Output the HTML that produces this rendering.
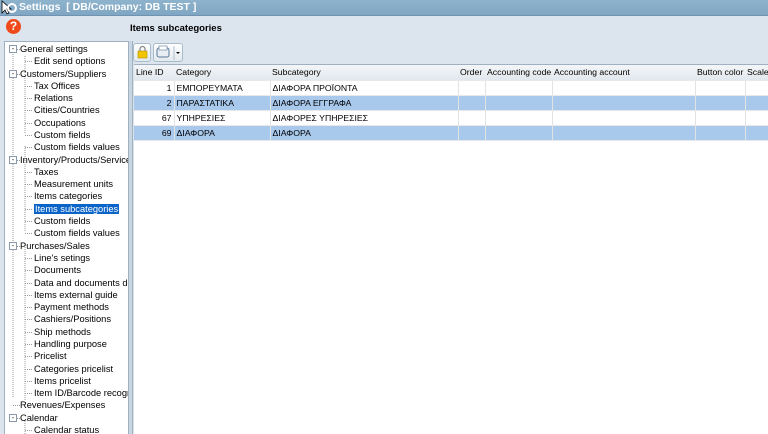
<!DOCTYPE html>
<html><head><meta charset="utf-8"><style>
*{margin:0;padding:0;box-sizing:border-box}
body{width:768px;height:434px;overflow:hidden;background:#dce5ee;font-family:"Liberation Sans","DejaVu Sans",sans-serif;font-size:9.3px;color:#000;position:relative}
.title{position:absolute;left:0;top:0;width:768px;height:16px;background:linear-gradient(#8fb3cd,#7fa6c3);border-bottom:1px solid #6f93b0;color:#fff;font-weight:bold;font-size:10.5px;line-height:15px;padding-left:19px}
.help{position:absolute;left:6px;top:19px;width:15px;height:15px;border-radius:50%;background:#f04a1a;color:#fff;font-weight:bold;font-size:12px;text-align:center;line-height:15px}
.hdr{position:absolute;left:130px;top:23px;font-weight:bold;font-size:9.5px}
.tree{position:absolute;left:4px;top:41px;width:125px;height:393px;background:#fff;border:1px solid #9fb0c0;border-bottom:none;overflow:hidden}
.strip{position:absolute;left:129px;top:41px;width:4px;height:393px;background:#c9d7e3;border-right:1px solid #9fb0c0}
.it{position:absolute;white-space:nowrap;line-height:12px}
.sel{background:#0a64c8;color:#fff;padding:0 1px}
.tb{position:absolute;top:43px;height:19px;border:1px solid #a9bccc;border-radius:3px;background:linear-gradient(#fff,#e3e9ee)}
.grid{position:absolute;left:134px;top:64px;width:634px;height:370px;background:#fff;border-top:1px solid #9fb0c0;overflow:hidden}
table{border-collapse:collapse;position:absolute;left:0;top:0;table-layout:fixed;width:637px}
td{height:15px;border-right:1px solid #e3e3e3;border-bottom:1px solid #e8e8e8;white-space:nowrap;overflow:hidden;padding:0 2px;font-size:8.7px}
tr.h td{background:linear-gradient(#f4f6f8,#e2e8ee);border-right:none;height:15px}
tr.b td{background:#a8c8ec}
.r{text-align:right}
</style></head><body>
<div class="title">Settings &nbsp;[ DB/Company: DB TEST ]</div>
<svg style="position:absolute;left:0;top:0" width="18" height="16"><path d="M2 1v12l3-3 2 4 2-1-2-4h4z" fill="#fff" stroke="#000" stroke-width="0.8"/><circle cx="12" cy="8" r="4" fill="none" stroke="#fff" stroke-width="2"/></svg>
<div class="help">?</div>
<div class="hdr">Items subcategories</div>
<div class="tb" style="left:133px;width:18px"><svg width="16" height="17"><rect x="4" y="7" width="9" height="7" fill="#f2c500" stroke="#b08a00" stroke-width=".6"/><path d="M6 7V5a2.5 2.5 0 0 1 5 0v2" fill="none" stroke="#888" stroke-width="1.2"/></svg></div>
<div class="tb" style="left:153px;width:30px"><svg width="28" height="17"><rect x="3" y="4" width="12" height="9" rx="2" fill="#e8eef4" stroke="#5a7a96"/><rect x="5" y="2" width="8" height="4" fill="#fff" stroke="#5a7a96" stroke-width=".6"/><line x1="20" y1="2" x2="20" y2="16" stroke="#b0c0cc"/><path d="M22 8h4l-2 2z" fill="#000"/></svg></div>
<div class="tree">
<svg style="position:absolute;left:0;top:0" width="40" height="400" stroke="#999" stroke-dasharray="1 1" fill="none">
<path d="M8 12V356M20 14V91M20 104V189M20 203V359M20 379V392"/>
</svg>
<div id="t"></div>
</div>
<div class="strip"></div>
<div class="grid"><table>
<colgroup><col style="width:40px"><col style="width:96px"><col style="width:188px"><col style="width:27px"><col style="width:67px"><col style="width:143px"><col style="width:50px"><col style="width:26px"></colgroup>
<tr class="h"><td>Line ID</td><td>Category</td><td>Subcategory</td><td>Order</td><td>Accounting code</td><td>Accounting account</td><td>Button color</td><td>Scale</td></tr>
<tr><td class="r">1</td><td>ΕΜΠΟΡΕΥΜΑΤΑ</td><td>ΔΙΑΦΟΡΑ ΠΡΟΪΟΝΤΑ</td><td></td><td></td><td></td><td></td><td></td></tr>
<tr class="b"><td class="r">2</td><td>ΠΑΡΑΣΤΑΤΙΚΑ</td><td>ΔΙΑΦΟΡΑ ΕΓΓΡΑΦΑ</td><td></td><td></td><td></td><td></td><td></td></tr>
<tr><td class="r">67</td><td>ΥΠΗΡΕΣΙΕΣ</td><td>ΔΙΑΦΟΡΕΣ ΥΠΗΡΕΣΙΕΣ</td><td></td><td></td><td></td><td></td><td></td></tr>
<tr class="b"><td class="r">69</td><td>ΔΙΑΦΟΡΑ</td><td>ΔΙΑΦΟΡΑ</td><td></td><td></td><td></td><td></td><td></td></tr>
</table></div>
<script>
var items=[[0,"General settings",1],[1,"Edit send options"],[0,"Customers/Suppliers",1],[1,"Tax Offices"],[1,"Relations"],[1,"Cities/Countries"],[1,"Occupations"],[1,"Custom fields"],[1,"Custom fields values"],[0,"Inventory/Products/Services",1],[1,"Taxes"],[1,"Measurement units"],[1,"Items categories"],[1,"Items subcategories",0,1],[1,"Custom fields"],[1,"Custom fields values"],[0,"Purchases/Sales",1],[1,"Line's setings"],[1,"Documents"],[1,"Data and documents design"],[1,"Items external guide"],[1,"Payment methods"],[1,"Cashiers/Positions"],[1,"Ship methods"],[1,"Handling purpose"],[1,"Pricelist"],[1,"Categories pricelist"],[1,"Items pricelist"],[1,"Item ID/Barcode recognize"],[0,"Revenues/Expenses"],[0,"Calendar",1],[1,"Calendar status"]];
var h="";items.forEach(function(a,i){var y=1+i*12.29;var x=a[0]?29:15;
h+='<svg style="position:absolute;left:'+(a[0]?20:8)+'px;top:'+(y+6)+'px" width="9" height="1"><line x1="0" y1=".5" x2="8" y2=".5" stroke="#999" stroke-dasharray="1 1"/></svg>';
if(a[2])h+='<div style="position:absolute;left:4px;top:'+(y+2)+'px;width:8px;height:8px;border:1px solid #8a9aaa;background:#fff;font-size:8px;line-height:5px;text-align:center;color:#333">-</div>';
h+='<div class="it" style="left:'+x+'px;top:'+y+'px"><span'+(a[3]?' class="sel"':'')+'>'+a[1]+'</span></div>';});
document.getElementById("t").innerHTML=h;
</script>
</body></html>
